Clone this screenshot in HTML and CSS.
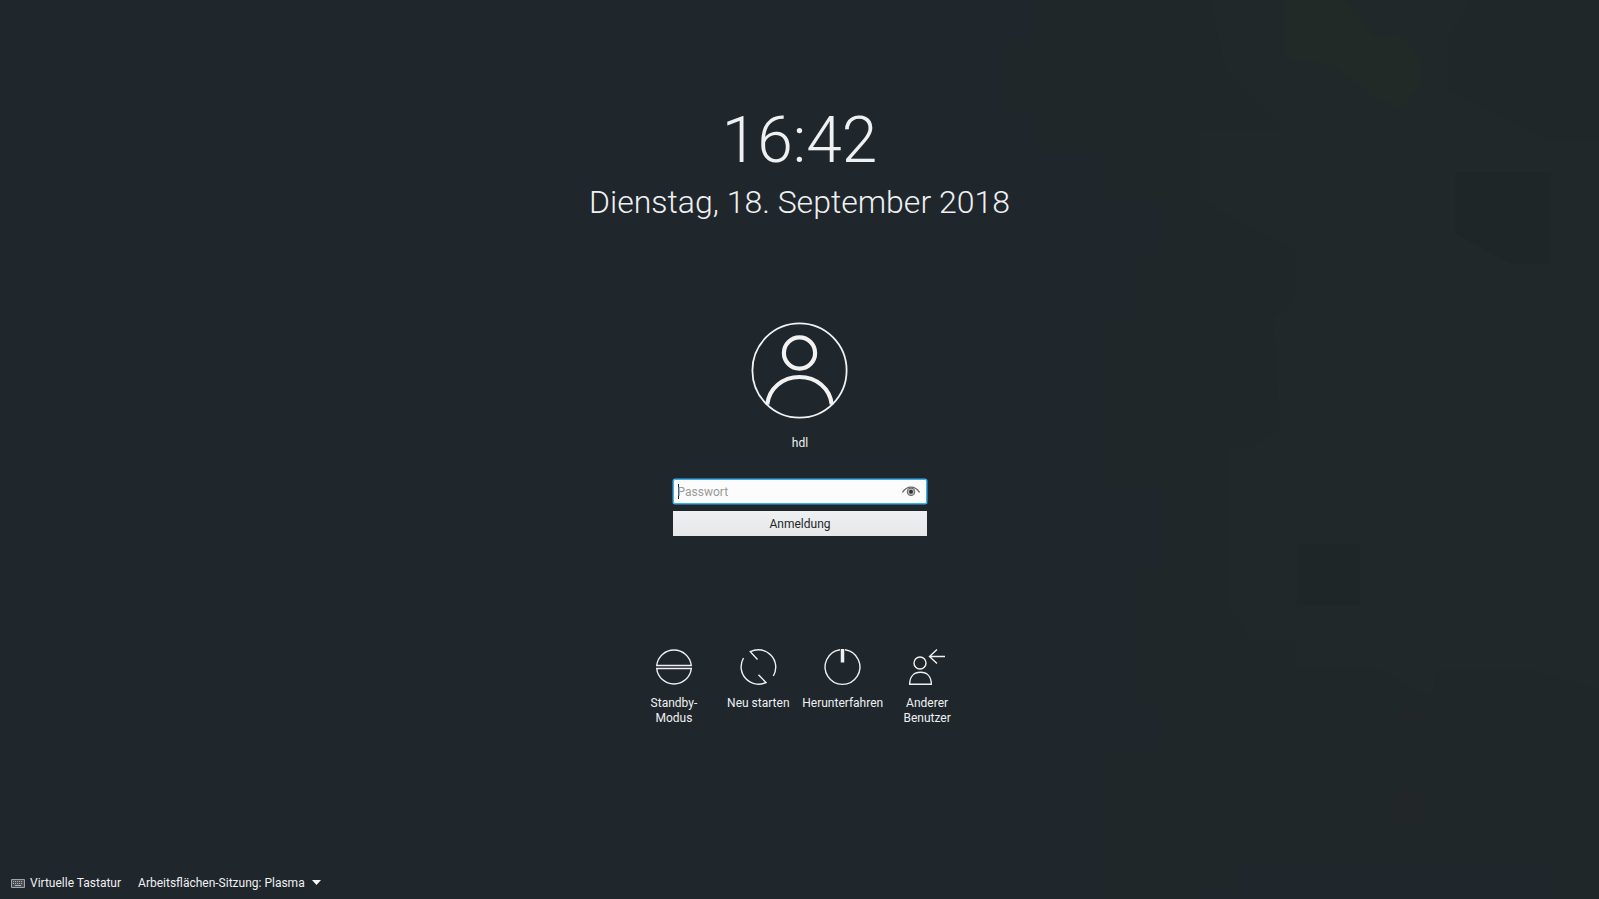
FILE: index.html
```html
<!DOCTYPE html>
<html lang="de">
<head>
    <meta charset="UTF-8">
    <meta name="viewport" content="width=device-width, initial-scale=1.0">
    <title>Anmeldung</title>
    <link rel="stylesheet" href="styles.css">
</head>
<body>
    <!-- Blurred wallpaper -->
    <svg class="wallpaper" viewBox="0 0 1599 899" preserveAspectRatio="none">
        <path fill="#1f2729" d="M1035 0H1599V899H1550V863H1236V890H1200V899H1102V751H1163V705H1134V569H1163V487H1102V320H1134V255H1163V202H1102V148H1035V110H1005V45H1035Z"/>
        <path fill="#202829" d="M1210 0H1470L1448 40L1450 90L1550 140H1599V690L1530 670H1440L1430 697L1375 668H1296V640H1250L1230 608V447H1250L1280 430L1272 320L1295 300V250L1262 235L1200 200V130H1285L1225 70Z"/>
        <path fill="#222a28" d="M1286 0H1345L1375 38L1400 34L1420 60V85L1400 109L1370 95L1335 65L1286 58Z"/>
        <path fill="#1e2628" d="M1297 544H1360V605H1297ZM1455 172H1551V264H1512L1455 233Z"/>
        <path fill="#222629" d="M1400 791H1425V823H1393V800ZM1400 712H1424V722H1400Z"/>
    </svg>

    <div class="container">
        <div class="clock">
            <h1>16:42</h1>
            <p>Dienstag, 18. September 2018</p>
        </div>

        <div class="user">
            <svg class="avatar" width="96" height="96" viewBox="0 0 96 96">
                <circle cx="47.5" cy="47.5" r="47.1" stroke-width="1.8"/>
                <circle cx="47.5" cy="30" r="15.6" stroke-width="4.2"/>
                <path d="M15.2 81.500C17 65.500 30.500 54 47.500 54S78 65.500 79.800 81.500" stroke-width="4.2"/>
            </svg>
            <p class="name">hdl</p>
        </div>

        <form class="login">
            <div class="password">
                <span class="cursor"></span>
                <span class="placeholder">Passwort</span>
                <svg class="eye" width="18" height="12" viewBox="0 0 18 12">
                    <path d="M.5 6.500C3 2.500 6 1.200 9 1.200S15 2.500 17.500 6.500" fill="none" stroke="#666" stroke-width="1.300"/>
                    <circle cx="9" cy="5.800" r="3.800" fill="#bbb" stroke="#666"/>
                    <circle cx="9" cy="5.800" r="2" fill="#333"/>
                </svg>
            </div>
            <button type="button">Anmeldung</button>
        </form>

        <div class="actions">
            <div class="action">
                <svg width="36" height="36" viewBox="0 0 36 36">
                    <path d="M.7 16.500A17.400 17.400 0 0 1 35.300 16.500ZM.7 19.500A17.400 17.400 0 0 0 35.300 19.500Z"/>
                </svg>
                <span>Standby-<br>Modus</span>
            </div>
            <div class="action">
                <svg width="36" height="36" viewBox="0 0 36 36">
                    <path d="M17.500 10.500L10.300 2.700A17.400 17.400 0 0 1 33.300 27M3.500 9A17.400 17.400 0 0 0 26 33.500L18.500 25.800"/>
                </svg>
                <span>Neu starten</span>
            </div>
            <div class="action">
                <svg width="36" height="36" viewBox="0 0 36 36">
                    <path d="M20 .8A17.400 17.400 0 1 1 15 .8"/>
                    <path d="M17.500 0V13.500" stroke-width="3.500"/>
                </svg>
                <span>Herunterfahren</span>
            </div>
            <div class="action">
                <svg width="36" height="36" viewBox="0 0 36 36">
                    <circle cx="11" cy="14" r="6"/>
                    <path d="M.7 35.300C.7 27.500 5 23.300 11.500 23.300S22.300 27.500 22.300 35.300ZM36 7.500H20.500M28 .5L20.500 7.500L28 14.500"/>
                </svg>
                <span>Anderer<br>Benutzer</span>
            </div>
        </div>
    </div>

    <div class="footer">
        <svg class="keyboard" width="14" height="9" viewBox="0 0 14 9">
            <path d="M.5 .5H13.500V8.500H.5Z" fill="#4a5055" stroke="#a2a6a9"/>
            <path d="M2 2.500H12M2 4.500H12" stroke="#aeb1b3" stroke-dasharray="1 1"/>
            <path d="M4 6.500H10" stroke="#aeb1b3"/>
        </svg>
        <span class="keyboard-label">Virtuelle Tastatur</span>
        <span class="session">Arbeitsflächen-Sitzung: Plasma</span>
        <svg class="arrow" width="9" height="5" viewBox="0 0 9 5">
            <path d="M0 0H9L4.500 5Z" fill="#fcfcfc"/>
        </svg>
    </div>
</body>
</html>
```
FILE: styles.css
```css
* {
    margin: 0;
    padding: 0;
    box-sizing: border-box;
}
html, body {
    height: 100%;
    overflow: hidden;
}
body {
    display: flex;
    flex-direction: column;
    background: #1f262c;
    color: #eff0f1;
    font-family: Roboto, sans-serif;
    font-size: 12px;
    line-height: 15px;
}
.wallpaper {
    position: absolute;
    width: 100%;
    height: 100%;
    z-index: -1; /* Keep it behind the content */
}
.container {
    display: flex;
    flex-direction: column;
    align-items: center;
    flex-grow: 1;
}
.clock {
    margin-top: 103px;
    text-align: center;
}
.clock h1 {
    font-size: 64px;
    font-weight: 300;
    line-height: 76px;
}
.clock p {
    font-size: 32px;
    font-weight: 300;
    line-height: 38px;
    margin-top: 4px;
}
.user {
    display: flex;
    flex-direction: column;
    align-items: center;
    margin-top: 101.5px;
}
.avatar {
    fill: none;
    stroke: #f2f2f2;
    overflow: visible;
}
.name {
    margin-top: 17.5px;
    padding-left: 1px;
}
.login {
    width: 255px;
    margin-top: 28px;
}
.password {
    display: flex;
    align-items: center;
    width: 254px;
    height: 25px;
    margin: 0 auto;
    padding: 0 6px 0 4px;
    background: #fcfcfc;
    border: 1px solid #3daee9;
    border-radius: 2px;
    box-shadow: 0 0 0 .5px #3daee9;
}
.cursor {
    width: 1px;
    height: 15px;
    background: #232629;
}
.placeholder {
    margin-left: -1px;
    padding-top: 2px;
    color: #999;
}
.eye {
    margin-left: auto;
}
.login button {
    display: block;
    width: 254px;
    height: 25px;
    margin: 7px auto 0;
    padding: 1px 0 0 1px;
    border: none;
    background: linear-gradient(#eff0f1, #e6e7e9);
    color: #232629;
    font: inherit;
}
.actions {
    display: flex;
    margin-top: 113px;
    padding-left: 2px;
}
.action {
    display: flex;
    flex-direction: column;
    align-items: center;
    width: 84.4px;
    text-align: center;
}
.action svg {
    fill: none;
    stroke: #eff0f1;
    stroke-width: 1.4;
    overflow: visible;
}
.action span {
    margin-top: 11px;
}
.footer {
    display: flex;
    align-items: center;
    height: 32px;
    padding-left: 11px;
}
.keyboard {
    margin-top: 1px;
}
.keyboard-label {
    margin-left: 5px;
}
.session {
    margin-left: 17px;
}
.arrow {
    margin: -2px 0 0 7px;
}
```
